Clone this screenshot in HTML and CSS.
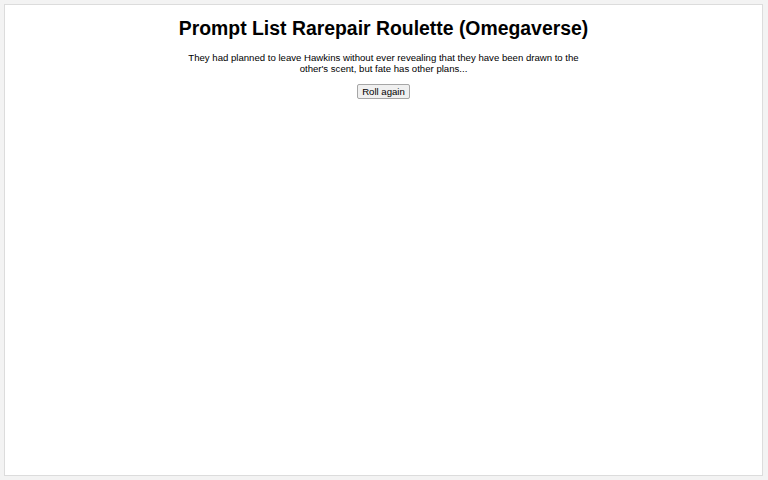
FILE: index.html
```html
<!DOCTYPE html>
<html lang="en">
<head>
<meta charset="utf-8">
<title>Prompt List Rarepair Roulette (Omegaverse)</title>
<link rel="stylesheet" href="styles.css">
</head>
<body>
<main class="card">
  <h1 class="title">Prompt List Rarepair Roulette (Omegaverse)</h1>
  <p class="prompt">They had planned to leave Hawkins without ever revealing that they have been drawn to the other's scent, but fate has other plans...</p>
  <button class="roll" type="button">Roll again</button>
</main>
</body>
</html>
```
FILE: styles.css
```css
html, body {
  margin: 0;
  height: 100%;
}

body {
  background: #f3f3f3;
  padding: 4px 5px 4px 4px;
  box-sizing: border-box;
  font-family: "Liberation Sans", Arial, sans-serif;
  color: #000;
}

.card {
  box-sizing: border-box;
  height: 472px;
  background: #fff;
  border: 1px solid #dcdcdc;
  display: flex;
  flex-direction: column;
  align-items: center;
  padding-top: 11px;
}

.title {
  margin: 0;
  font-size: 19.4px;
  font-weight: bold;
  line-height: 24px;
}

.prompt {
  margin: 12px 0 0;
  width: 400px;
  font-size: 9.6px;
  line-height: 11px;
  text-align: center;
}

.roll {
  margin-top: 10px;
  font-family: "Liberation Sans", Arial, sans-serif;
  font-size: 9.6px;
  line-height: 11px;
  padding: 1px 4px;
  background: #f0f0f0;
  border: 1px solid #a6a6a6;
  border-radius: 2px;
  color: #000;
}
```
